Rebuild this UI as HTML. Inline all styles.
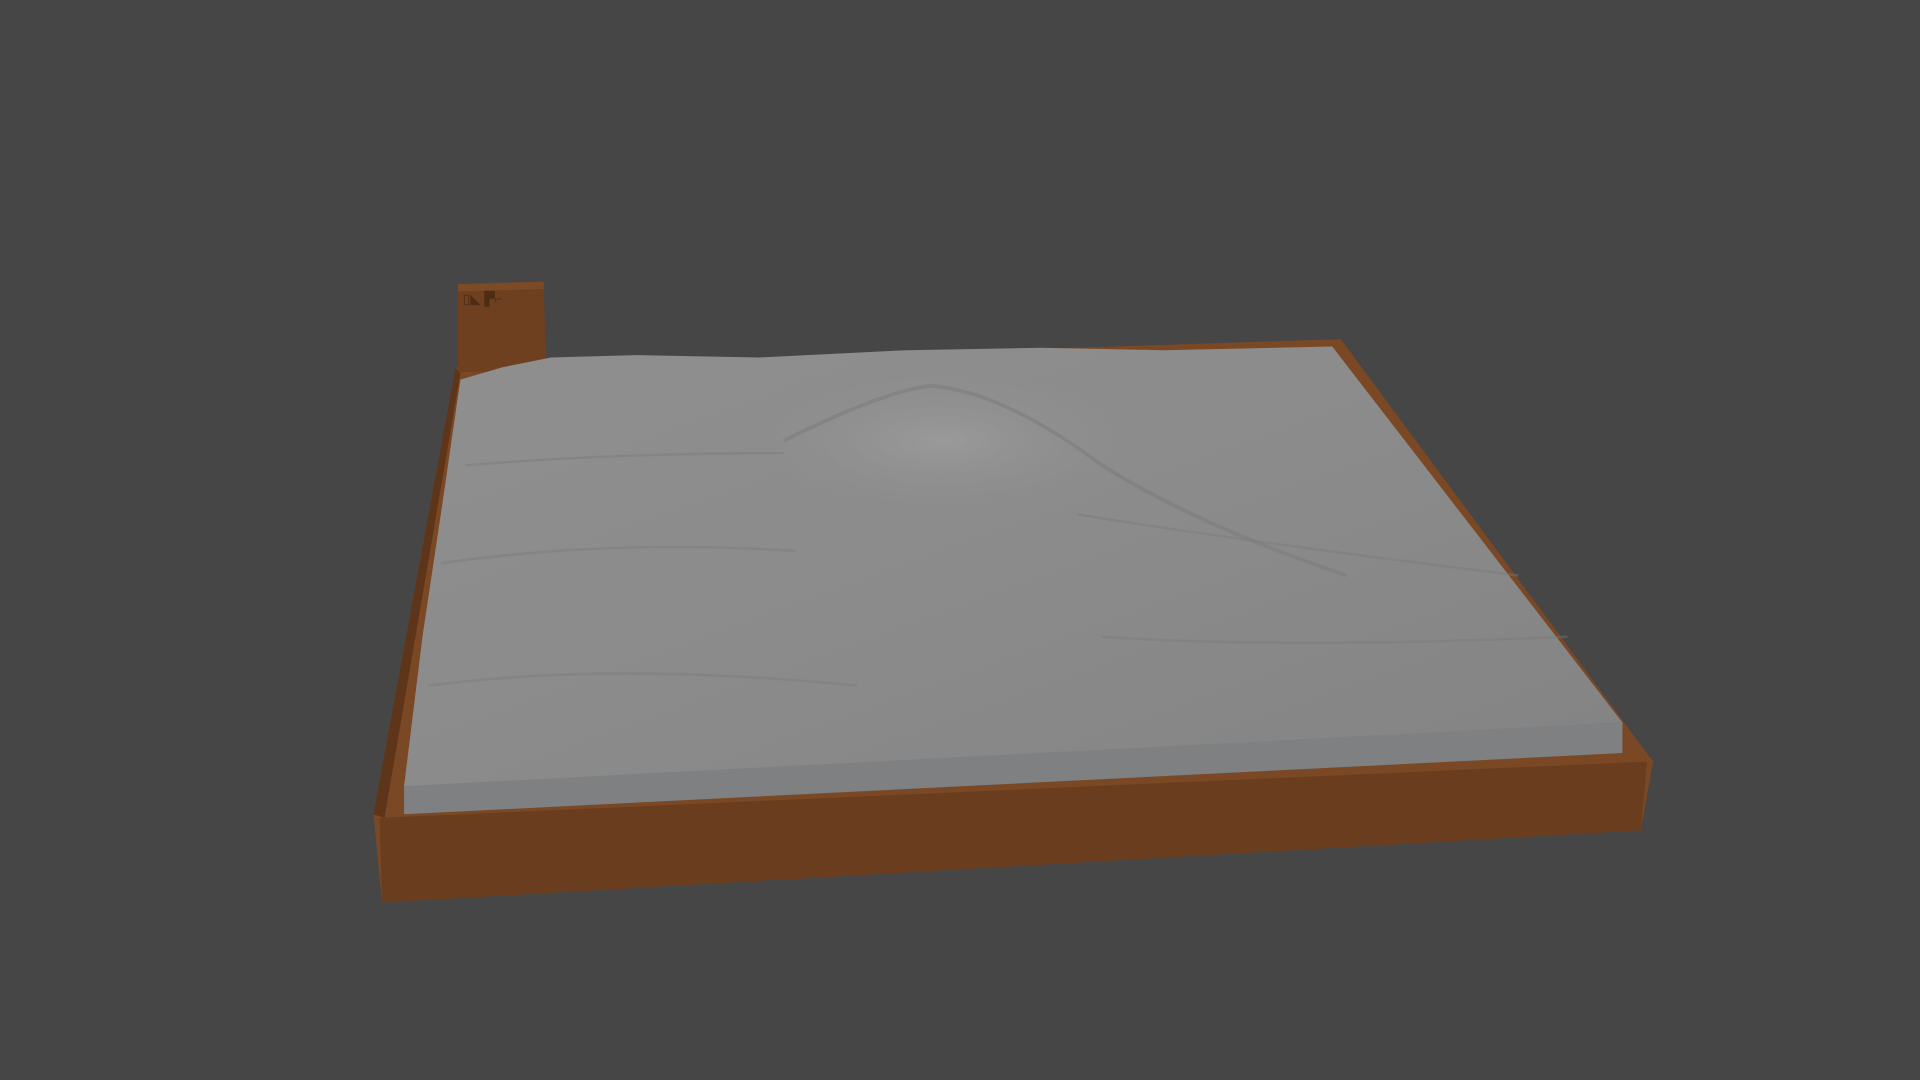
<!DOCTYPE html>
<html><head><meta charset="utf-8"><style>
html,body{margin:0;padding:0;width:1920px;height:1080px;overflow:hidden;background:#464646}
svg{display:block}
</style></head><body>
<svg width="1920" height="1080" viewBox="0 0 1568 882" xmlns="http://www.w3.org/2000/svg">
<defs>
<linearGradient id="terr" x1="0" y1="0" x2="1" y2="1">
<stop offset="0" stop-color="#8f8f8f"/><stop offset="0.5" stop-color="#8b8b8b"/><stop offset="1" stop-color="#838383"/>
</linearGradient>
<radialGradient id="mt" cx="0.5" cy="0.5" r="0.5">
<stop offset="0" stop-color="#9a9a9a"/><stop offset="1" stop-color="#8a8a8a" stop-opacity="0"/>
</radialGradient>
</defs>
<rect width="1568" height="882" fill="#464646"/>
<polygon points="372,300 1095,277 1350,622 1340,678 312,737 305,665" fill="#7a4824"/>
<polygon points="310,668 1345,622 1340,678 312,737" fill="#6a3d1e"/>
<polygon points="305,665 372,300 376,305 314,668" fill="#5e3519"/>
<polygon points="374,232 444,230 446,302 374,304" fill="#6f401f"/>
<polygon points="374,232 444,230 444,236 374,238" fill="#7d4a26"/>
<text x="378" y="248" font-family="Liberation Sans, sans-serif" font-size="11" fill="#4e2b13">▯◣ ▛⌐</text>
<polygon points="330,640 1325,590 1325,615 330,665" fill="#7e8081"/>
<path d="M376,310 L410,300 L450,292 L520,290 L620,292 L740,286 L850,284 L950,286 L1088,283 L1325,590 L330,642 L345,520 L360,420 Z" fill="url(#terr)"/>
<ellipse cx="770" cy="360" rx="190" ry="70" fill="url(#mt)"/>
<path d="M640,360 Q720,320 760,315 Q820,320 900,380 Q980,430 1100,470" fill="none" stroke="#7a7a7a" stroke-width="3" opacity="0.5"/>
<path d="M380,380 Q500,370 640,370 M360,460 Q500,440 650,450 M350,560 Q500,540 700,560 M880,420 Q1000,440 1240,470 M900,520 Q1050,530 1280,520" fill="none" stroke="#777" stroke-width="2" opacity="0.4"/>
</svg>
</body></html>
